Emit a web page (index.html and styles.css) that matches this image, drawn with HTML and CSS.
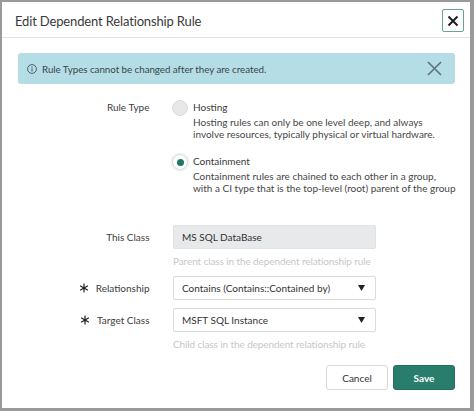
FILE: index.html
```html
<!DOCTYPE html>
<html>
<head>
<meta charset="utf-8">
<link rel="stylesheet" href="styles.css">
</head>
<body>
<div class="dialog">
  <div class="header">
    <div class="title">Edit Dependent Relationship Rule</div>
    <button class="close-btn" aria-label="Close">
      <svg width="12" height="12" viewBox="0 0 12 12"><path d="M1.5 1.5 L10.5 10.5 M10.5 1.5 L1.5 10.5" stroke="#1e1e1e" stroke-width="2"/></svg>
    </button>
  </div>
  <div class="body">
    <div class="banner">
      <svg class="info-icon" width="10" height="10" viewBox="0 0 10 10"><circle cx="5" cy="5" r="4.4" fill="none" stroke="#41585d" stroke-width="0.9"/><circle cx="5" cy="2.9" r="0.65" fill="#41585d"/><path d="M5 4.3 V7.6" stroke="#41585d" stroke-width="0.95"/></svg>
      <span class="banner-text">Rule Types cannot be changed after they are created.</span>
      <svg class="banner-close" width="15" height="15" viewBox="0 0 15 15"><path d="M1 1 L14 14 M14 1 L1 14" stroke="#5e777c" stroke-width="1.7"/></svg>
    </div>

    <div class="row rule-row">
      <div class="label rt-label">Rule Type</div>
      <div class="radios">
        <div class="radio-opt">
          <span class="radio"></span>
          <div class="radio-text">
            <div class="radio-title">Hosting</div>
            <div class="radio-desc">Hosting rules can only be one level deep, and always<br>involve resources, typically physical or virtual hardware.</div>
          </div>
        </div>
        <div class="radio-opt">
          <span class="radio checked"></span>
          <div class="radio-text">
            <div class="radio-title">Containment</div>
            <div class="radio-desc">Containment rules are chained to each other in a group,<br>with a CI type that is the top-level (root) parent of the group</div>
          </div>
        </div>
      </div>
    </div>

    <div class="row class-row">
      <div class="label field-label">This Class</div>
      <div class="control">
        <div class="input readonly">MS SQL DataBase</div>
        <div class="help">Parent class in the dependent relationship rule</div>
      </div>
    </div>

    <div class="row rel-row">
      <div class="label field-label"><svg class="req" width="10" height="10" viewBox="0 0 10 10"><path d="M5 0.5 V9.5 M1.1 2.75 L8.9 7.25 M8.9 2.75 L1.1 7.25" stroke="#222" stroke-width="1.2"/></svg>Relationship</div>
      <div class="control">
        <div class="input select"><span>Contains (Contains::Contained by)</span><svg class="caret" width="7" height="6" viewBox="0 0 7 6"><path d="M0 0 H7 L3.5 6 Z" fill="#222"/></svg></div>
      </div>
    </div>

    <div class="row target-row">
      <div class="label field-label"><svg class="req" width="10" height="10" viewBox="0 0 10 10"><path d="M5 0.5 V9.5 M1.1 2.75 L8.9 7.25 M8.9 2.75 L1.1 7.25" stroke="#222" stroke-width="1.2"/></svg>Target Class</div>
      <div class="control">
        <div class="input select"><span>MSFT SQL Instance</span><svg class="caret" width="7" height="6" viewBox="0 0 7 6"><path d="M0 0 H7 L3.5 6 Z" fill="#222"/></svg></div>
        <div class="help">Child class in the dependent relationship rule</div>
      </div>
    </div>

    <div class="footer">
      <button class="btn cancel">Cancel</button>
      <button class="btn save">Save</button>
    </div>
  </div>
</div>
</body>
</html>
```

FILE: styles.css
```css
html, body {
  margin: 0;
  padding: 0;
  background: #9a9a9a;
  width: 474px;
  height: 411px;
  overflow: hidden;
}
body {
  font-family: Lato, "Noto Sans", sans-serif;
  color: #444;
}
.dialog {
  margin: 2px 0 0 2px;
  width: 468px;
  height: 406px;
  background: #fff;
  overflow: hidden;
}
.header {
  height: 36px;
  border-bottom: 1px solid #e3e3e3;
  box-sizing: border-box;
  display: flex;
  align-items: flex-start;
  justify-content: space-between;
  padding: 0 6px 0 13px;
}
.title {
  font-size: 13px;
  letter-spacing: -0.15px;
  color: #3a3a3a;
  line-height: 16px;
  margin-top: 11px;
}
.close-btn {
  width: 22px;
  height: 23px;
  margin-top: 7px;
  border: 1.5px solid #67a397;
  border-radius: 2px;
  background: #fff;
  display: flex;
  align-items: center;
  justify-content: center;
  padding: 0;
  box-sizing: border-box;
}
.body {
  padding: 15px 15px 0 16px;
}
.banner {
  height: 31px;
  background: #b4dde5;
  border-radius: 3px;
  display: flex;
  align-items: center;
  padding: 0 13px 0 9px;
  font-size: 9.8px;
  letter-spacing: -0.05px;
  color: #3a4749;
}
.info-icon { margin-right: 5px; }
.banner-text { flex: 1; }
.row {
  display: grid;
  grid-template-columns: 131.5px 203px;
  column-gap: 23.5px;
  font-size: 10px;
}
.rule-row { margin-top: 16px; }
.class-row { margin-top: 31px; }
.rel-row { margin-top: 9px; }
.target-row { margin-top: 8px; }
.label {
  text-align: right;
  color: #404040;
}
.rt-label { line-height: 14px; }
.radios {
  display: flex;
  flex-direction: column;
  gap: 14px;
  width: 290px;
}
.radio-opt {
  display: flex;
  gap: 5px;
}
.radio {
  flex: none;
  width: 16px;
  height: 16px;
  box-sizing: border-box;
  border-radius: 50%;
  background: #e8e8e8;
  border: 1px solid #dadada;
  position: relative;
  margin-left: -1px;
}
.radio.checked {
  background: #fff;
  border-color: #d3dfdc;
  box-shadow: 0 0 0 1.5px #eef4f2;
}
.radio.checked::after {
  content: "";
  position: absolute;
  left: 3.5px;
  top: 3.5px;
  width: 7px;
  height: 7px;
  border-radius: 50%;
  background: #1e7868;
}
.radio-title { color: #3a3a3a; line-height: 14px; }
.radio-desc { color: #464646; font-size: 10px; line-height: 11.5px; margin-top: 3px; white-space: nowrap; }
.field-label {
  display: flex;
  align-items: center;
  justify-content: flex-end;
  height: 24px;
}
.req {
  margin-right: 7px;
  flex: none;
}
.input {
  height: 24px;
  box-sizing: border-box;
  border: 1px solid #dcdcdc;
  border-radius: 2px;
  padding: 0 10px 0 8px;
  display: flex;
  align-items: center;
  color: #333;
}
.input.readonly {
  background: #e7e9ea;
  border-color: #e0e2e3;
}
.select {
  justify-content: space-between;
}
.help {
  color: #c7c7c7;
  margin-top: 6px;
  line-height: 12px;
  white-space: nowrap;
  letter-spacing: -0.1px;
}
.footer {
  display: flex;
  justify-content: flex-end;
  gap: 5px;
  margin-top: 15px;
}
.btn {
  height: 25px;
  width: 62px;
  font-family: inherit;
  font-size: 10px;
  border-radius: 3px;
  padding: 0;
  box-sizing: border-box;
}
.cancel {
  background: #fff;
  border: 1px solid #d8d8d8;
  color: #333;
}
.save {
  background: #287d6c;
  border: 1px solid #226e5f;
  color: #fff;
  font-weight: bold;
}
```
